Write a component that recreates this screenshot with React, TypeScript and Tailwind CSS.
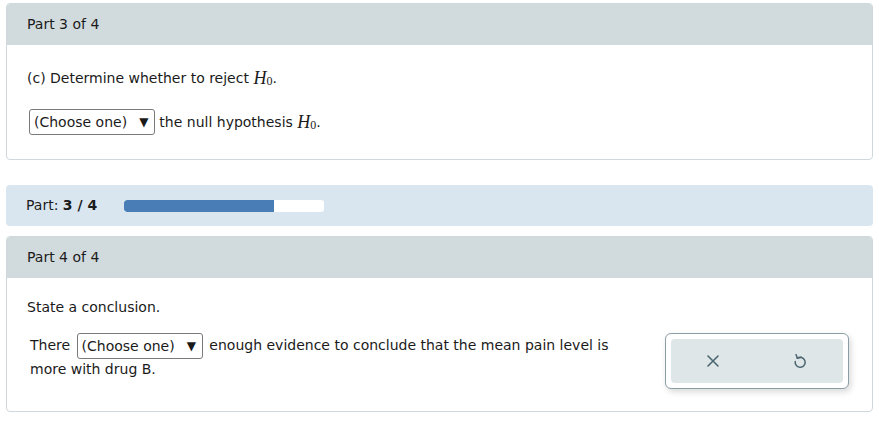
import React from 'react';

function H0() {
  return (
    <span className="font-['Liberation_Serif',serif] text-[18px] leading-none">
      <i>H</i>
      <sub className="not-italic text-[12px] relative top-[1px]">0</sub>
    </span>
  );
}

function ChooseOne({ tight }: { tight?: boolean }) {
  return (
    <span
      className={`inline-flex items-center h-[26px] pl-[4px] pr-[6px] mx-[2px] border border-[#7a7a7a] rounded-[3px] bg-white text-[#1a1a1a] align-middle leading-none ${tight ? '-my-[2px]' : ''}`}
    >
      <span>(Choose one)</span>
      <span className="ml-[12px] text-[12px]">▼</span>
    </span>
  );
}

function Card({ title, children }: { title: string; children: React.ReactNode }) {
  return (
    <div className="border border-[#d0d8db] rounded-[4px] overflow-hidden bg-white">
      <div className="h-[41px] bg-[#d1dadd] flex items-center px-[20px] text-[#1b1b1b]">{title}</div>
      <div>{children}</div>
    </div>
  );
}

export default function App() {
  return (
    <div className="w-[879px] h-[432px] bg-white px-[6px] pt-[3px] font-['DejaVu_Sans',Verdana,sans-serif] text-[14px] text-[#1b1b1b]">
      <div className="w-[867px]">
        <Card title="Part 3 of 4">
          <div className="px-[20px] pt-[22px] pb-[24px]">
            <div className="h-[22px] flex items-center">
              <span>(c) Determine whether to reject&nbsp;</span>
              <H0 />
              <span>.</span>
            </div>
            <div className="mt-[20px] flex items-center">
              <ChooseOne />
              <span className="ml-[2px]">the null hypothesis&nbsp;</span>
              <H0 />
              <span>.</span>
            </div>
          </div>
        </Card>

        <div className="mt-[25px] h-[41px] bg-[#dae6ef] rounded-[4px] flex items-center px-[20px]">
          <span>Part:&nbsp;</span>
          <span className="font-bold">3 / 4</span>
          <div className="ml-[27px] w-[200px] h-[12px] bg-white rounded-[3px] overflow-hidden">
            <div className="h-full bg-[#487db6] rounded-l-[3px]" style={{ width: '75%' }} />
          </div>
        </div>

        <div className="mt-[10px]">
          <Card title="Part 4 of 4">
            <div className="px-[20px] pt-[19px] pb-[22px]">
              <div className="h-[20px] flex items-center">State a conclusion.</div>
              <div className="mt-[16px] flex items-start justify-between">
                <div className="w-[590px] pl-[3px] leading-[24px] pb-[2px]">
                  There <ChooseOne tight /> enough evidence to conclude that the mean pain level is more with drug B.
                </div>
                <div className="mr-[3px] w-[184px] h-[56px] border border-[#8b9ea6] rounded-[6px] bg-white p-[5px] shadow-[2px_3px_6px_rgba(0,0,0,0.15)]">
                  <div className="h-full bg-[#dfe6e8] rounded-[4px] flex items-center pl-[35px] gap-[72px] text-[#4c6672]">
                    <svg width="14" height="14" viewBox="0 0 14 14" fill="none" stroke="currentColor" strokeWidth="1.6" strokeLinecap="round">
                      <path d="M2 2 L12 12 M12 2 L2 12" />
                    </svg>
                    <svg width="16" height="18" viewBox="0 0 16 18" fill="none" stroke="currentColor" strokeWidth="1.5" strokeLinecap="round" strokeLinejoin="round">
                      <path d="M5.2 6.2 A5 5 0 1 1 3.2 9.5" />
                      <path d="M4 2.6 L5.4 6.3 L9.2 5.2" />
                    </svg>
                  </div>
                </div>
              </div>
            </div>
          </Card>
        </div>
      </div>
    </div>
  );
}
